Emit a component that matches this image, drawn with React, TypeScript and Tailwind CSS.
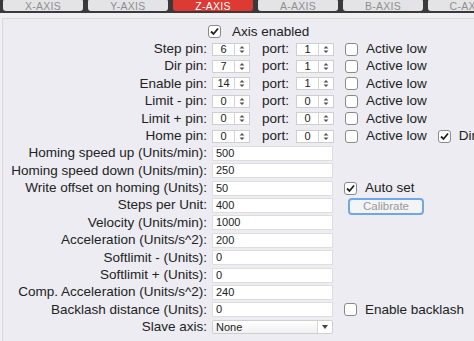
import React from 'react';

const font = { fontFamily: '"Liberation Sans", Arial, sans-serif' };

const tabs = ['X-AXIS', 'Y-AXIS', 'Z-AXIS', 'A-AXIS', 'B-AXIS', 'C-AXIS'];

const Check: React.FC<{ checked?: boolean }> = ({ checked }) => (
  <div className="w-[13px] h-[13px] shrink-0 rounded-[3px] border border-[#8a8a8a] bg-white flex items-center justify-center">
    {checked && (
      <svg width="11" height="11" viewBox="0 0 11 11">
        <path d="M2 5.5 L4.5 8 L9 2.5" fill="none" stroke="#222" strokeWidth="1.8" />
      </svg>
    )}
  </div>
);

const Spin: React.FC<{ value: string }> = ({ value }) => (
  <div className="flex shrink-0 h-[13px] w-[38px] border border-[#cfcfcf] bg-white text-[11px] leading-[11px]">
    <div className="flex-1 flex items-center justify-center">{value}</div>
    <div className="w-[15px] border-l border-[#d4d4d4] flex items-center justify-center">
      <svg width="6" height="9" viewBox="0 0 6 9">
        <path d="M0.5 3.5 L3 1 L5.5 3.5 Z M0.5 5.5 L3 8 L5.5 5.5 Z" fill="#555" />
      </svg>
    </div>
  </div>
);

const Label: React.FC<{ children: React.ReactNode }> = ({ children }) => (
  <div className="w-[209px] shrink-0 text-right pr-[5px] whitespace-nowrap">{children}</div>
);

const Field: React.FC<{ value: string }> = ({ value }) => (
  <div className="w-[121px] shrink-0 h-[15px] bg-white border border-[#dedede] text-[11px] leading-[13px] pl-[3px]">{value}</div>
);

const pins = [
  { label: 'Step pin:', pin: '6', port: '1' },
  { label: 'Dir pin:', pin: '7', port: '1' },
  { label: 'Enable pin:', pin: '14', port: '1' },
  { label: 'Limit - pin:', pin: '0', port: '0' },
  { label: 'Limit + pin:', pin: '0', port: '0' },
  { label: 'Home pin:', pin: '0', port: '0' },
];

const fields = [
  { label: 'Homing speed up (Units/min):', value: '500' },
  { label: 'Homing speed down (Units/min):', value: '250' },
  { label: 'Write offset on homing (Units):', value: '50', extra: 'auto' },
  { label: 'Steps per Unit:', value: '400', extra: 'calib' },
  { label: 'Velocity (Units/min):', value: '1000' },
  { label: 'Acceleration (Units/s^2):', value: '200' },
  { label: 'Softlimit - (Units):', value: '0' },
  { label: 'Softlimit + (Units):', value: '0' },
  { label: 'Comp. Acceleration (Units/s^2):', value: '240' },
  { label: 'Backlash distance (Units):', value: '0', extra: 'backlash' },
];

export default function App() {
  return (
    <div className="w-[474px] h-[341px] overflow-hidden bg-[#f0f0f2] text-[#222] text-[13.5px]" style={font}>
      {/* Tab bar */}
      <div className="h-[13px] bg-[#3a3a3a] flex gap-[5px] pl-[3px]">
        {tabs.map((t) => (
          <div
            key={t}
            className={`w-[80px] h-[11px] shrink-0 rounded-b-[3px] rounded-t-[1px] flex items-center justify-center text-[10.5px] leading-[10px] tracking-[0.3px] ${
              t === 'Z-AXIS' ? 'bg-[#dc3a33] text-white' : 'bg-[#e4e4e6] text-[#8e8e8e]'
            }`}
          >
            {t}
          </div>
        ))}
      </div>

      {/* Panel */}
      <div className="mt-[5px] ml-[2px] h-[330px] border-l border-t border-[#d8d8dc] bg-[#ececf2] pt-[4px]">
        <div className="h-[17.4px] flex items-center">
          <div className="w-[205px] shrink-0" />
          <Check checked />
          <span className="ml-[11px]">Axis enabled</span>
        </div>

        {pins.map((p, i) => (
          <div key={p.label} className="h-[17.4px] flex items-center whitespace-nowrap">
            <Label>{p.label}</Label>
            <Spin value={p.pin} />
            <span className="ml-[12px] w-[34px] shrink-0">port:</span>
            <Spin value={p.port} />
            <div className="ml-[11px] flex items-center shrink-0">
              <Check />
              <span className="ml-[8px]">Active low</span>
            </div>
            {i === 5 && (
              <div className="ml-[11px] flex items-center shrink-0">
                <Check checked />
                <span className="ml-[8px]">Dir</span>
              </div>
            )}
          </div>
        ))}

        {fields.map((f) => (
          <div key={f.label} className="h-[17.4px] flex items-center whitespace-nowrap">
            <Label>{f.label}</Label>
            <Field value={f.value} />
            {f.extra === 'auto' && (
              <div className="ml-[11px] flex items-center shrink-0">
                <Check checked />
                <span className="ml-[8px]">Auto set</span>
              </div>
            )}
            {f.extra === 'calib' && (
              <div className="ml-[15px] w-[76px] h-[17px] mt-[2px] shrink-0 rounded-[4px] border-2 border-[#6fa8e6] bg-[#f4f4f6] flex items-center justify-center text-[11.5px] text-[#999]">
                Calibrate
              </div>
            )}
            {f.extra === 'backlash' && (
              <div className="ml-[11px] flex items-center shrink-0">
                <Check />
                <span className="ml-[8px]">Enable backlash</span>
              </div>
            )}
          </div>
        ))}

        <div className="h-[17.4px] flex items-center">
          <Label>Slave axis:</Label>
          <div className="w-[121px] shrink-0 h-[14px] flex bg-white border border-[#cfcfcf] rounded-[2px] text-[11px] leading-[12px]">
            <div className="flex-1 pl-[3px] bg-gradient-to-b from-white to-[#f0f0f0]">None</div>
            <div className="w-[15px] border-l border-[#d4d4d4] flex items-center justify-center">
              <svg width="6" height="4" viewBox="0 0 6 4">
                <path d="M0 0 L6 0 L3 4 Z" fill="#444" />
              </svg>
            </div>
          </div>
        </div>
      </div>
    </div>
  );
}
